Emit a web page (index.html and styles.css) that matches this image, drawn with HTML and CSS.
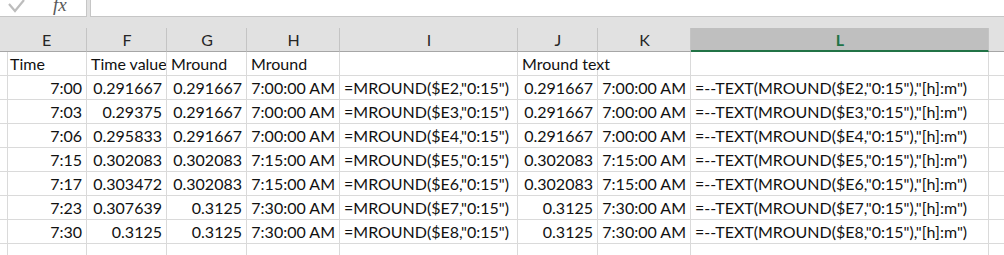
FILE: index.html
```html
<!DOCTYPE html>
<html>
<head>
<meta charset="utf-8">
<link rel="stylesheet" href="styles.css">
</head>
<body>
<div class="fbar">
  <div class="fbox">
    <svg class="check" width="18" height="14" viewBox="0 0 18 14"><polyline points="1,4 7,11 16,0" fill="none" stroke="#bdbdbd" stroke-width="2.2"/></svg>
    <span class="fx">fx</span>
  </div>
  <div class="finput"></div>
</div>
<div class="gap"></div>
<div class="sheet">
  <div class="row head">
    <div class="c rh"></div><div class="c">E</div><div class="c">F</div><div class="c">G</div><div class="c">H</div><div class="c">I</div><div class="c">J</div><div class="c">K</div><div class="c sel">L</div><div class="c rest"></div>
  </div>
  <div class="row">
    <div class="c rh"></div><div class="c">Time</div><div class="c">Time value</div><div class="c">Mround</div><div class="c">Mround</div><div class="c"></div><div class="c spill">Mround text</div><div class="c"></div><div class="c"></div><div class="c rest"></div>
  </div>
  <div class="row">
    <div class="c rh"></div><div class="c n">7:00</div><div class="c n">0.291667</div><div class="c n">0.291667</div><div class="c n">7:00:00 AM</div><div class="c">=MROUND($E2,"0:15")</div><div class="c n">0.291667</div><div class="c n">7:00:00 AM</div><div class="c">=--TEXT(MROUND($E2,"0:15"),"[h]:m")</div><div class="c rest"></div>
  </div>
  <div class="row">
    <div class="c rh"></div><div class="c n">7:03</div><div class="c n">0.29375</div><div class="c n">0.291667</div><div class="c n">7:00:00 AM</div><div class="c">=MROUND($E3,"0:15")</div><div class="c n">0.291667</div><div class="c n">7:00:00 AM</div><div class="c">=--TEXT(MROUND($E3,"0:15"),"[h]:m")</div><div class="c rest"></div>
  </div>
  <div class="row">
    <div class="c rh"></div><div class="c n">7:06</div><div class="c n">0.295833</div><div class="c n">0.291667</div><div class="c n">7:00:00 AM</div><div class="c">=MROUND($E4,"0:15")</div><div class="c n">0.291667</div><div class="c n">7:00:00 AM</div><div class="c">=--TEXT(MROUND($E4,"0:15"),"[h]:m")</div><div class="c rest"></div>
  </div>
  <div class="row">
    <div class="c rh"></div><div class="c n">7:15</div><div class="c n">0.302083</div><div class="c n">0.302083</div><div class="c n">7:15:00 AM</div><div class="c">=MROUND($E5,"0:15")</div><div class="c n">0.302083</div><div class="c n">7:15:00 AM</div><div class="c">=--TEXT(MROUND($E5,"0:15"),"[h]:m")</div><div class="c rest"></div>
  </div>
  <div class="row">
    <div class="c rh"></div><div class="c n">7:17</div><div class="c n">0.303472</div><div class="c n">0.302083</div><div class="c n">7:15:00 AM</div><div class="c">=MROUND($E6,"0:15")</div><div class="c n">0.302083</div><div class="c n">7:15:00 AM</div><div class="c">=--TEXT(MROUND($E6,"0:15"),"[h]:m")</div><div class="c rest"></div>
  </div>
  <div class="row">
    <div class="c rh"></div><div class="c n">7:23</div><div class="c n">0.307639</div><div class="c n">0.3125</div><div class="c n">7:30:00 AM</div><div class="c">=MROUND($E7,"0:15")</div><div class="c n">0.3125</div><div class="c n">7:30:00 AM</div><div class="c">=--TEXT(MROUND($E7,"0:15"),"[h]:m")</div><div class="c rest"></div>
  </div>
  <div class="row">
    <div class="c rh"></div><div class="c n">7:30</div><div class="c n">0.3125</div><div class="c n">0.3125</div><div class="c n">7:30:00 AM</div><div class="c">=MROUND($E8,"0:15")</div><div class="c n">0.3125</div><div class="c n">7:30:00 AM</div><div class="c">=--TEXT(MROUND($E8,"0:15"),"[h]:m")</div><div class="c rest"></div>
  </div>
  <div class="row">
    <div class="c rh"></div><div class="c"></div><div class="c"></div><div class="c"></div><div class="c"></div><div class="c"></div><div class="c"></div><div class="c"></div><div class="c"></div><div class="c rest"></div>
  </div>
</div>
</body>
</html>
```

FILE: styles.css
```css
html, body {
  margin: 0;
  padding: 0;
  background: #ffffff;
  overflow: hidden;
}
body {
  height: 255px;
  font-family: Lato, "Liberation Sans", sans-serif;
  font-size: 16px;
  color: #111;
}
.fbar {
  display: flex;
  height: 17px;
  background: #e1e1e1;
}
.fbox {
  width: 87px;
  box-sizing: border-box;
  background: #fff;
  border-right: 1px solid #c6c6c6;
  border-bottom: 1px solid #c6c6c6;
  position: relative;
  overflow: hidden;
}
.check {
  position: absolute;
  left: 8px;
  top: 0;
}
.fx {
  position: absolute;
  left: 53px;
  top: -5px;
  font-family: "Liberation Serif", serif;
  font-style: italic;
  font-size: 19px;
  color: #5a5a5a;
  line-height: 19px;
}
.finput {
  flex: 1;
  margin-left: 3px;
  background: #fff;
  border-left: 1px solid #c6c6c6;
  border-bottom: 1px solid #c6c6c6;
}
.gap {
  height: 11px;
  background: #e1e1e1;
}
.row {
  display: grid;
  grid-template-columns: 6px 81px 80px 80px 93px 178px 80px 93px 298px 1fr;
  height: 24px;
}
.c {
  box-sizing: border-box;
  border-right: 1px solid #dadada;
  border-bottom: 1px solid #dadada;
  padding: 0 3px 0 4px;
  line-height: 23px;
  white-space: nowrap;
  overflow: hidden;
}
.c.n {
  text-align: right;
  padding: 0 4px 0 3px;
}
.c.spill {
  overflow: visible;
  position: relative;
  z-index: 1;
}
.c.rest {
  border-right: none;
}
.head .c {
  background: #e1e1e1;
  border-right: 1px solid #c4c4c4;
  border-bottom: 1px solid #a6a6a6;
  text-align: center;
  color: #262626;
  line-height: 24px;
}
.head .c.sel {
  background: #bfbfbf;
  color: #217346;
  font-weight: 700;
  border-bottom: 2px solid #217346;
  line-height: 23px;
}
.head .c.rest {
  border-right: none;
}
```
